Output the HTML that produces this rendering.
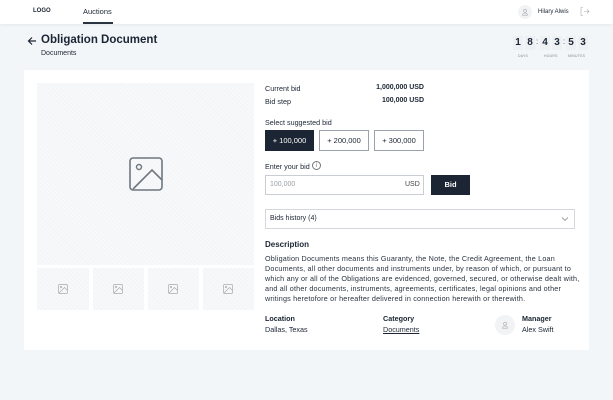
<!DOCTYPE html><html><head><style>
*{margin:0;padding:0;box-sizing:border-box}
body{width:613px;height:400px;background:#f3f6f9;font-family:"Liberation Sans",sans-serif;color:#1b2533;position:relative;overflow:hidden;font-size:7.2px}
.a{position:absolute}
.hdr{left:0;top:0;width:613px;height:24px;background:#fff;box-shadow:0 1px 3px rgba(0,0,0,.06)}
.card{left:24px;top:70px;width:565px;height:280px;background:#fff}
.hatch{background:repeating-linear-gradient(45deg,#f3f5f6 0 1.5px,#f8f9fa 1.5px 3px)}
.d{top:36px;width:10px;height:14px;background:#eef1f4;font-weight:bold;font-size:10px;text-align:center;line-height:14px}
.c{top:37px;font-size:8px;color:#555}
.lbl{top:54px;font-size:3.5px;color:#888;letter-spacing:.2px}
.btn{top:130px;height:21px;border:1px solid #9aa2ab;font-size:7.5px;text-align:center;line-height:19px}
</style></head><body>
<div class="a hdr"></div>
<div class="a" style="left:33px;top:8px;font-size:6px;font-weight:bold">LOGO</div>
<div class="a" style="left:83px;top:7px;font-size:7.5px">Auctions</div>
<div class="a" style="left:83px;top:22px;width:30px;height:2px;background:#2a3340"></div>
<div class="a" style="left:518px;top:5px;width:14px;height:14px;border-radius:50%;background:#f1f3f5"></div>
<svg class="a" style="left:521px;top:8px" width="8" height="8" viewBox="0 0 8 8"><circle cx="4" cy="2.7" r="1.5" fill="none" stroke="#aaa" stroke-width=".6"/><path d="M1.5 7.2a2.5 2.2 0 0 1 5 0z" fill="none" stroke="#aaa" stroke-width=".6"/></svg>
<div class="a" style="left:538px;top:9px;font-size:6px">Hilary Alwis</div>
<svg class="a" style="left:580px;top:7px" width="10" height="9" viewBox="0 0 10 9"><path d="M3 .5H1v8h2M4 4.5h5M7 2.5l2 2-2 2" fill="none" stroke="#aaa" stroke-width=".6"/></svg>
<svg class="a" style="left:27px;top:36px" width="10" height="10" viewBox="0 0 10 10"><path d="M9 5H1.5M5 1.5 1.5 5 5 8.5" fill="none" stroke="#1b2533" stroke-width="1.2"/></svg>
<div class="a" style="left:41px;top:34px;font-size:11.5px;font-weight:bold">Obligation Document</div>
<div class="a" style="left:41px;top:50px;font-size:7px">Documents</div>
<div class="a d" style="left:513px">1</div><div class="a d" style="left:525px">8</div><div class="a c" style="left:536px">:</div>
<div class="a d" style="left:540px">4</div><div class="a d" style="left:552px">3</div><div class="a c" style="left:563px">:</div>
<div class="a d" style="left:566px">5</div><div class="a d" style="left:578px">3</div>
<div class="a lbl" style="left:518px">DAYS</div><div class="a lbl" style="left:544px">HOURS</div><div class="a lbl" style="left:568px">MINUTES</div>
<div class="a card"></div>
<div class="a hatch" style="left:37px;top:83px;width:217px;height:182px"></div>
<svg class="a" style="left:129px;top:157px" width="34" height="34" viewBox="0 0 34 34"><rect x="1" y="1" width="32" height="32" rx="3" fill="none" stroke="#6f7780" stroke-width="1.6"/><circle cx="10" cy="10" r="2.5" fill="none" stroke="#6f7780" stroke-width="1.4"/><path d="M4 32 23 13l10 10" fill="none" stroke="#6f7780" stroke-width="1.6"/></svg>
<div class="a hatch" style="left:37px;top:268px;width:52px;height:42px"></div>
<div class="a hatch" style="left:93px;top:268px;width:51px;height:42px"></div>
<div class="a hatch" style="left:148px;top:268px;width:51px;height:42px"></div>
<div class="a hatch" style="left:203px;top:268px;width:51px;height:42px"></div>
<svg class="a" style="left:58px;top:284px" width="10" height="10" viewBox="0 0 10 10"><rect x=".5" y=".5" width="9" height="9" rx="1" fill="none" stroke="#aaa" stroke-width=".7"/><circle cx="3" cy="3" r=".8" fill="none" stroke="#aaa" stroke-width=".6"/><path d="M1 9 6.5 3.5 9.5 6.5" fill="none" stroke="#aaa" stroke-width=".7"/></svg>
<svg class="a" style="left:113px;top:284px" width="10" height="10" viewBox="0 0 10 10"><rect x=".5" y=".5" width="9" height="9" rx="1" fill="none" stroke="#aaa" stroke-width=".7"/><circle cx="3" cy="3" r=".8" fill="none" stroke="#aaa" stroke-width=".6"/><path d="M1 9 6.5 3.5 9.5 6.5" fill="none" stroke="#aaa" stroke-width=".7"/></svg>
<svg class="a" style="left:168px;top:284px" width="10" height="10" viewBox="0 0 10 10"><rect x=".5" y=".5" width="9" height="9" rx="1" fill="none" stroke="#aaa" stroke-width=".7"/><circle cx="3" cy="3" r=".8" fill="none" stroke="#aaa" stroke-width=".6"/><path d="M1 9 6.5 3.5 9.5 6.5" fill="none" stroke="#aaa" stroke-width=".7"/></svg>
<svg class="a" style="left:223px;top:284px" width="10" height="10" viewBox="0 0 10 10"><rect x=".5" y=".5" width="9" height="9" rx="1" fill="none" stroke="#aaa" stroke-width=".7"/><circle cx="3" cy="3" r=".8" fill="none" stroke="#aaa" stroke-width=".6"/><path d="M1 9 6.5 3.5 9.5 6.5" fill="none" stroke="#aaa" stroke-width=".7"/></svg>
<div class="a" style="left:265px;top:84px">Current bid</div>
<div class="a" style="left:265px;top:97px">Bid step</div>
<div class="a" style="left:330px;top:84px;width:94px;text-align:right;font-weight:bold;font-size:7px">1,000,000 USD</div>
<div class="a" style="left:330px;top:97px;width:94px;text-align:right;font-weight:bold;font-size:7px">100,000 USD</div>
<div class="a" style="left:265px;top:118px">Select suggested bid</div>
<div class="a btn" style="left:265px;width:49px;background:#1b2533;border-color:#1b2533;color:#fff">+ 100,000</div>
<div class="a btn" style="left:319px;width:50px">+ 200,000</div>
<div class="a btn" style="left:374px;width:50px">+ 300,000</div>
<div class="a" style="left:265px;top:162px">Enter your bid</div>
<div class="a" style="left:312px;top:161px;width:9px;height:9px;border:.7px solid #777;border-radius:50%;font-size:6px;text-align:center;line-height:8px;color:#777">i</div>
<div class="a" style="left:265px;top:175px;width:159px;height:20px;border:1px solid #c9ced4"></div>
<div class="a" style="left:270px;top:181px;color:#9aa0a6;font-size:7px">100,000</div>
<div class="a" style="left:405px;top:181px;font-size:7px;color:#444">USD</div>
<div class="a" style="left:431px;top:175px;width:39px;height:20px;background:#1b2533;color:#fff;font-weight:bold;text-align:center;line-height:20px;font-size:7.5px">Bid</div>
<div class="a" style="left:265px;top:209px;width:310px;height:20px;border:1px solid #d3d7dc"></div>
<div class="a" style="left:270px;top:215px;font-size:7px">Bids history (4)</div>
<svg class="a" style="left:561px;top:216px" width="8" height="6" viewBox="0 0 8 6"><path d="M1 1.5 4 4.5 7 1.5" fill="none" stroke="#777" stroke-width=".7"/></svg>
<div class="a" style="left:265px;top:240px;font-weight:bold;font-size:8px">Description</div>
<div class="a" style="left:265px;top:254px;width:318px;font-size:7.2px;line-height:10px;color:#2a3340;letter-spacing:.2px">Obligation Documents means this Guaranty, the Note, the Credit Agreement, the Loan Documents, all other documents and instruments under, by reason of which, or pursuant to which any or all of the Obligations are evidenced, governed, secured, or otherwise dealt with, and all other documents, instruments, agreements, certificates, legal opinions and other writings heretofore or hereafter delivered in connection herewith or therewith.</div>
<div class="a" style="left:265px;top:314px;font-weight:bold">Location</div>
<div class="a" style="left:265px;top:325px">Dallas, Texas</div>
<div class="a" style="left:383px;top:314px;font-weight:bold">Category</div>
<div class="a" style="left:383px;top:325px;text-decoration:underline">Documents</div>
<div class="a" style="left:495px;top:315px;width:20px;height:20px;border-radius:50%;background:#f1f3f5"></div>
<svg class="a" style="left:501px;top:321px" width="8" height="8" viewBox="0 0 8 8"><circle cx="4" cy="2.7" r="1.5" fill="none" stroke="#aaa" stroke-width=".6"/><path d="M1.5 7.2a2.5 2.2 0 0 1 5 0z" fill="none" stroke="#aaa" stroke-width=".6"/></svg>
<div class="a" style="left:522px;top:314px;font-weight:bold">Manager</div>
<div class="a" style="left:522px;top:325px">Alex Swift</div>
</body></html>
